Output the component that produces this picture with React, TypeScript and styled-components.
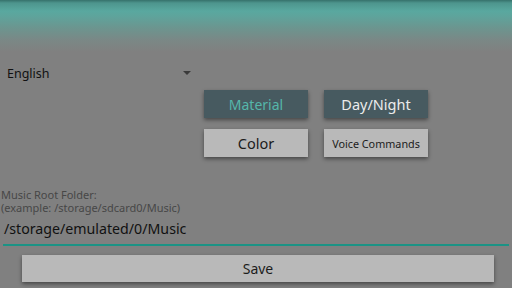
import React from "react";
import styled, { createGlobalStyle } from "styled-components";

const Global = createGlobalStyle`
  html, body { margin: 0; padding: 0; background: #808080; }
  * { box-sizing: border-box; }
`;

const Page = styled.div`
  width: 512px;
  height: 288px;
  overflow: hidden;
  font-family: "Noto Sans", "Open Sans", sans-serif;
  background: linear-gradient(
    to bottom,
    #36716b 0px,
    #4d958d 3px,
    #59a89f 11px,
    #5ea49c 16px,
    #6c958f 28px,
    #7a8886 40px,
    #808080 52px,
    #808080 100%
  );
  display: flex;
  flex-direction: column;
  padding-top: 62px;
`;

const Spinner = styled.div`
  width: 196px;
  height: 22px;
  display: flex;
  align-items: center;
  justify-content: space-between;
  padding: 0 4px 0 7px;
  font-size: 12.5px;
  color: #111;
`;

const Arrow = styled.span`
  width: 0;
  height: 0;
  border-left: 4px solid transparent;
  border-right: 4px solid transparent;
  border-top: 4px solid #3a3a3a;
  margin-right: 1px;
`;

const Grid = styled.div`
  margin: 6px 0 0 204px;
  display: grid;
  grid-template-columns: 104px 104px;
  grid-auto-rows: 28px;
  column-gap: 16px;
  row-gap: 11px;
`;

const Btn = styled.div<{ $dark?: boolean; $accent?: boolean; $size?: number }>`
  display: flex;
  align-items: center;
  justify-content: center;
  background: ${(p) => (p.$dark ? "#475a60" : "#b9b9b9")};
  color: ${(p) => (p.$accent ? "#55b6aa" : p.$dark ? "#ececec" : "#1c1c1c")};
  font-size: ${(p) => p.$size ?? 14}px;
  box-shadow: 0 2px 4px rgba(0, 0, 0, 0.45);
  white-space: nowrap;
`;

const Label = styled.div`
  margin: 32px 0 0 1px;
  font-size: 11px;
  line-height: 12.5px;
  color: #474747;
`;

const Input = styled.div`
  margin: 4px 3px 0 3px;
  padding: 0 0 4px 1px;
  font-size: 14.2px;
  line-height: 22px;
  color: #111;
  border-bottom: 2px solid #1b9385;
`;

const SaveWrap = styled.div`
  margin: 9px 18px 0 22px;
`;

const SaveBtn = styled(Btn)`
  height: 27px;
`;

export default function App() {
  return (
    <>
      <Global />
      <Page>
        <Spinner>
          <span>English</span>
          <Arrow />
        </Spinner>
        <Grid>
          <Btn $dark $accent $size={14}>Material</Btn>
          <Btn $dark $size={14.5}>Day/Night</Btn>
          <Btn $size={14.5}>Color</Btn>
          <Btn $size={10.8}>Voice Commands</Btn>
        </Grid>
        <Label>
          Music Root Folder:
          <br />
          (example: /storage/sdcard0/Music)
        </Label>
        <Input>/storage/emulated/0/Music</Input>
        <SaveWrap>
          <SaveBtn $size={14}>Save</SaveBtn>
        </SaveWrap>
      </Page>
    </>
  );
}
